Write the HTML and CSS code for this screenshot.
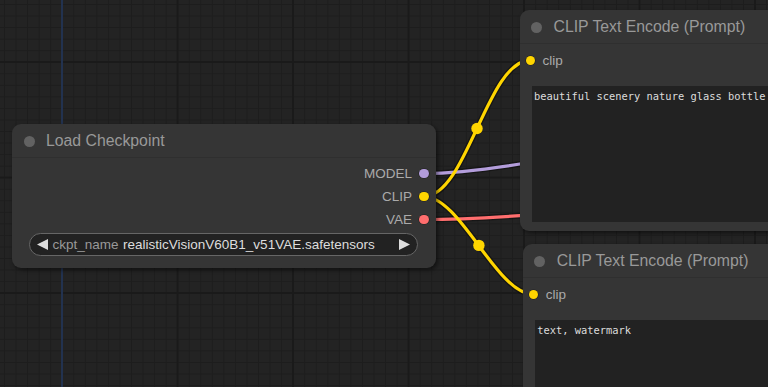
FILE: index.html
```html
<!DOCTYPE html>
<html lang="en">
<head>
    <meta charset="UTF-8">
    <meta name="viewport" content="width=device-width, initial-scale=1.0">
    <title>Graph</title>
    <link rel="stylesheet" href="styles.css">
</head>
<body>

    <div class="canvas">
        <!-- links sit under the nodes, like the litegraph background layer -->
        <svg class="links" width="768" height="387" viewBox="0 0 768 387">
            <g class="link-shadow">
                <path d="M424 173.5 C544 173.5, 780 100, 900 100"/>
                <path d="M424 219.5 C543 219.5, 781 190, 900 190"/>
                <path d="M424 196.5 C467 196.5, 487 60.3, 530 60.3"/>
                <path d="M424 196.5 C460.5 196.5, 496.5 294.3, 533.3 294.3"/>
            </g>
            <path class="link link-model" d="M424 173.5 C544 173.5, 780 100, 900 100"/>
            <path class="link link-vae" d="M424 219.5 C543 219.5, 781 190, 900 190"/>
            <path class="link link-clip" d="M424 196.5 C467 196.5, 487 60.3, 530 60.3"/>
            <path class="link link-clip" d="M424 196.5 C460.5 196.5, 496.5 294.3, 533.3 294.3"/>
            <circle class="link-center" cx="477" cy="128.5" r="5.7"/>
            <circle class="link-center" cx="478.9" cy="245.4" r="5.7"/>
        </svg>

        <div class="node node-checkpoint">
            <div class="node-title"><span class="title-dot"></span>Load Checkpoint</div>
            <div class="node-body">
                <div class="outputs">
                    <div class="slot"><span>MODEL</span><i class="dot dot-model"></i></div>
                    <div class="slot"><span>CLIP</span><i class="dot dot-clip"></i></div>
                    <div class="slot"><span>VAE</span><i class="dot dot-vae"></i></div>
                </div>
                <div class="combo">
                    <svg class="arrow" width="11" height="11" viewBox="0 0 11 11"><path d="M11 0 L0 5.5 L11 11 Z"/></svg>
                    <span class="combo-label">ckpt_name</span>
                    <span class="combo-value">realisticVisionV60B1_v51VAE.safetensors</span>
                    <svg class="arrow" width="11" height="11" viewBox="0 0 11 11"><path d="M0 0 L11 5.5 L0 11 Z"/></svg>
                </div>
            </div>
        </div>

        <div class="node node-clip node-positive">
            <div class="node-title"><span class="title-dot"></span>CLIP Text Encode (Prompt)</div>
            <div class="node-body">
                <div class="inputs">
                    <div class="slot"><i class="dot dot-clip"></i><span>clip</span></div>
                </div>
                <textarea class="prompt" spellcheck="false">beautiful scenery nature glass bottle landscape, , purple galaxy bottle,</textarea>
            </div>
        </div>

        <div class="node node-clip node-negative">
            <div class="node-title"><span class="title-dot"></span>CLIP Text Encode (Prompt)</div>
            <div class="node-body">
                <div class="inputs">
                    <div class="slot"><i class="dot dot-clip"></i><span>clip</span></div>
                </div>
                <textarea class="prompt" spellcheck="false">text, watermark</textarea>
            </div>
        </div>
    </div>

</body>
</html>
```

FILE: styles.css
```css
html, body {
    margin: 0;
    height: 100%;
}

body {
    font-family: 'Liberation Sans', Arial, sans-serif;
    background-color: #222;
    overflow: hidden;
}

.canvas {
    position: relative;
    width: 768px;
    height: 387px;
    overflow: hidden;
    background-color: #232323;
    background-image:
        linear-gradient(90deg, transparent 61px, #22324f 61px, #22324f 63px, transparent 63px),
        linear-gradient(90deg, #1a1a1a 2px, transparent 2px),
        linear-gradient(180deg, #1a1a1a 2px, transparent 2px),
        linear-gradient(90deg, #1d1d1d 1px, transparent 1px),
        linear-gradient(180deg, #1d1d1d 1px, transparent 1px);
    background-size:
        768px 387px,
        115.5px 115.5px,
        115.5px 115.5px,
        11.55px 11.55px,
        11.55px 11.55px;
    background-position:
        0 0,
        61px 0,
        0 61px,
        4px 0,
        0 4px;
    background-repeat: no-repeat, repeat, repeat, repeat, repeat;
}

/* links */
.links {
    position: absolute;
    top: 0;
    left: 0;
}

.link-shadow path {
    fill: none;
    stroke: rgba(0, 0, 0, 0.35);
    stroke-width: 6;
}

.link {
    fill: none;
    stroke-width: 3.2;
}

.link-model {
    stroke: #b39ddb;
}

.link-vae {
    stroke: #ff6e6e;
}

.link-clip {
    stroke: #ffd500;
}

.link-center {
    fill: #ffd500;
}

/* nodes */
.node {
    position: absolute;
    display: flex;
    flex-direction: column;
    background-color: #353535;
    border-radius: 9px;
    box-shadow: 2px 2px 4px rgba(0, 0, 0, 0.5);
    box-sizing: border-box;
}

.node-checkpoint {
    left: 12px;
    top: 124px;
    width: 424px;
    height: 144px;
}

.node-positive {
    left: 519.5px;
    top: 10px;
    width: 320px;
    height: 221px;
}

.node-negative {
    left: 522.7px;
    top: 244px;
    width: 320px;
    height: 200px;
}

.node-title {
    display: flex;
    align-items: center;
    height: 34px;
    flex-shrink: 0;
    box-sizing: border-box;
    padding: 1px 0 0 11.5px;
    border-bottom: 1px solid #2f2f2f;
    font-size: 15.8px;
    color: #999;
    white-space: nowrap;
}

.title-dot {
    width: 11px;
    height: 11px;
    margin-right: 11.5px;
    border-radius: 50%;
    background-color: #626262;
}

.node-body {
    flex: 1;
    display: flex;
    flex-direction: column;
    min-height: 0;
}

.slot {
    display: flex;
    align-items: center;
    height: 23px;
    font-size: 13.5px;
    color: #aaa;
}

.dot {
    width: 9.4px;
    height: 9.4px;
    border-radius: 50%;
    box-shadow: 0 0 0 0.6px rgba(0, 0, 0, 0.4);
}

.dot-model {
    background-color: #b39ddb;
}

.dot-clip {
    background-color: #ffd500;
}

.dot-vae {
    background-color: #ff6e6e;
}

.outputs {
    display: flex;
    flex-direction: column;
    align-items: flex-end;
    padding: 4px 7.3px 0 0;
}

.outputs .slot span {
    margin-right: 7.3px;
}

.combo {
    display: flex;
    align-items: center;
    height: 23.4px;
    margin: 1.5px 18.3px 0 17.3px;
    padding: 0 7px 0 6.7px;
    box-sizing: border-box;
    background-color: #222;
    border: 1px solid #666;
    border-radius: 12px;
    font-size: 13.5px;
    white-space: nowrap;
}

.arrow {
    flex-shrink: 0;
    fill: #ddd;
}

.combo-label {
    margin-left: 4.6px;
    color: #999;
}

.combo-value {
    flex: 1;
    margin-right: 24px;
    text-align: right;
    color: #ddd;
}

.inputs {
    padding: 5px 0 0 6px;
}

.inputs .slot span {
    margin-left: 7.7px;
}

.prompt {
    flex: 1;
    min-height: 0;
    margin: 13.7px 0 9px 12.5px;
    padding: 4px 2px;
    border: none;
    outline: none;
    resize: none;
    overflow: hidden;
    white-space: pre;
    background-color: #222;
    color: #ddd;
    font-family: 'DejaVu Sans Mono', 'Liberation Mono', monospace;
    font-size: 10.4px;
    line-height: 1.25;
}
```
